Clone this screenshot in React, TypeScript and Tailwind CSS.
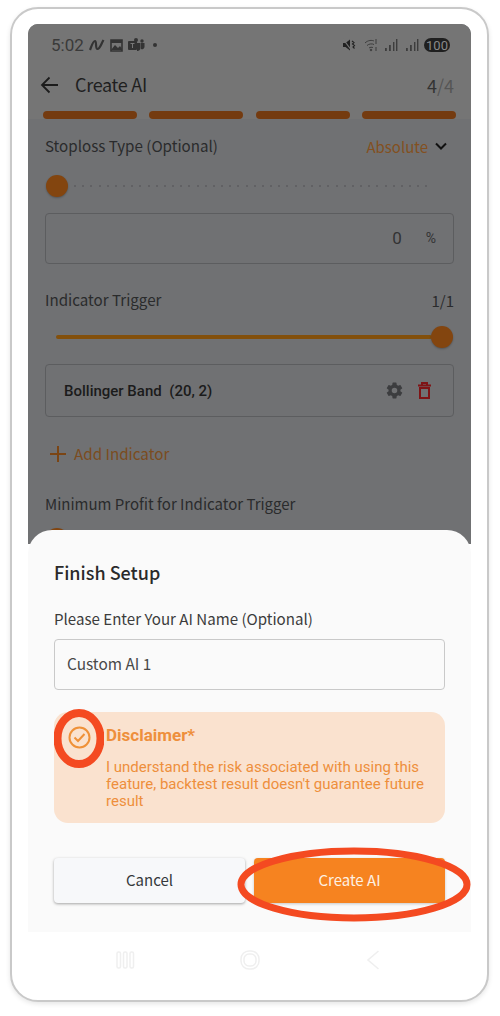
import React from "react";

const cjk = "font-['Noto_Sans_CJK_SC','Noto_Sans',sans-serif]";
const rob = "font-['Roboto',sans-serif]";

function Bar() {
  return <div className="h-2 w-[94px] rounded-full bg-[#743b10]" />;
}

function Thumb() {
  return <div className="h-[22px] w-[22px] shrink-0 rounded-full bg-[#83450f] shadow-[0_1px_2px_rgba(0,0,0,0.25)]" />;
}

const dots = Array.from({ length: 44 }, (_, i) => i);

function StatusBar() {
  return (
    <div className={`flex h-[42px] items-center justify-between pl-[23px] pr-[21px] text-[#3a3a3a] ${rob}`}>
      <div className="flex items-center gap-[5px]">
        <span className="text-[17px] leading-none">5:02</span>
        <svg width="16" height="12" viewBox="0 0 16 12" fill="none" stroke="#333" strokeWidth="2.2">
          <path d="M1 11 C3 6 4 2 6 2 C8 2 6 10 8.500 10 C11 10 12 5 14.500 1" />
        </svg>
        <svg width="13" height="13" viewBox="0 0 13 13">
          <path d="M1 1h11v11H1z" fill="none" stroke="#333" strokeWidth="1.600" />
          <path d="M1 11l4-5 3 3 2-2 2 3v1H1z" fill="#333" />
          <rect x="1" y="1" width="11" height="3" fill="#333" />
        </svg>
        <svg width="17" height="14" viewBox="0 0 17 14" fill="#333">
          <rect x="0" y="3" width="9" height="9" rx="1" />
          <circle cx="8" cy="2" r="2" />
          <circle cx="14" cy="3" r="1.700" />
          <path d="M9 5h3.500v5a3 3 0 0 1-3.500 3zM13 5h3.500v4a2.500 2.500 0 0 1-3.500 2z" />
          <path d="M2.500 5h4v1H5v4H4V6H2.500z" fill="#777" />
        </svg>
        <div className="ml-[3px] h-1 w-1 rounded-full bg-[#333]" />
      </div>
      <div className="flex items-center gap-[4px]">
        <svg width="14" height="14" viewBox="0 0 14 14" fill="#222">
          <path d="M1 5h2.500L8 1.500v11L3.500 9H1z" />
          <path d="M1 1l9 12" stroke="#777" strokeWidth="1.200" />
          <path d="M10 3l2 1.500-1.500 1.500 2 1.500-1.500 1.500 1.500 1.500" stroke="#222" fill="none" strokeWidth="1.100" />
        </svg>
        <svg className="ml-[4px]" width="16" height="14" viewBox="0 0 16 14" fill="none" stroke="#3d3d3d" strokeWidth="1">
          <path d="M1 5c3-3 7-3 9-2M3 7.500c2-1.800 5-2 7-1M5 10c1-.8 3-1 4-.4" />
          <circle cx="7" cy="12" r="0.800" fill="#3d3d3d" />
          <path d="M12 1v5M12 9v4" />
        </svg>
        <svg width="14" height="14" viewBox="0 0 14 14" fill="#3d3d3d">
          <rect x="1" y="10" width="1.800" height="3" />
          <rect x="5" y="7" width="1.800" height="6" />
          <rect x="9" y="4" width="1.400" height="9" />
          <rect x="12" y="1" width="1.400" height="12" />
        </svg>
        <svg className="ml-[3px]" width="14" height="14" viewBox="0 0 14 14" fill="#3d3d3d">
          <rect x="1" y="10" width="1.800" height="3" />
          <rect x="5" y="7" width="1.800" height="6" />
          <rect x="9" y="4" width="1.400" height="9" />
          <rect x="12" y="1" width="1.400" height="12" />
        </svg>
        <div className="ml-[1px] flex h-[14px] w-[26px] items-center justify-center rounded-full bg-[#1f1f1f] text-[13px] leading-none text-[#8a8a8a]">
          100
        </div>
      </div>
    </div>
  );
}

function Background() {
  return (
    <div className={`h-[520px] overflow-hidden bg-[#707173] text-[#2a2b2c] ${cjk}`}>
      <div className="bg-[#757575]">
        <StatusBar />
        <div className="flex h-[38px] items-center justify-between pl-[12px] pr-[17px]">
          <div className="flex items-center gap-[16px]">
            <svg width="19" height="18" viewBox="0 0 19 18" fill="none" stroke="#1c1c1c" strokeWidth="1.800">
              <path d="M18 9H2M9.500 1.500L2 9l7.500 7.500" />
            </svg>
            <span className="mb-[2px] text-[18px] leading-none tracking-[-0.3px] text-[#1f1f1f]">Create AI</span>
          </div>
          <span className="mb-[1px] text-[18px] leading-none">
            <span className="text-[#333]">4</span>
            <span className="text-[#555]">/4</span>
          </span>
        </div>
        <div className="flex justify-between px-[15px] pt-[7px]">
          <Bar />
          <Bar />
          <Bar />
          <Bar />
        </div>
      </div>
      <div className="flex flex-col px-[17px]">
        <div className="mt-[16px] flex h-[22px] items-center justify-between pr-[7px]">
          <span className="text-[15.15px] leading-none">Stoploss Type (Optional)</span>
          <div className="flex items-center gap-[7px]">
            <span className="text-[15px] leading-none text-[#83501f]">Absolute</span>
            <svg width="12" height="8" viewBox="0 0 12 8" fill="none" stroke="#111" strokeWidth="2">
              <path d="M1 1.500l5 5 5-5" />
            </svg>
          </div>
        </div>
        <div className="mt-[18px] flex h-[22px] items-center pl-[1px]">
          <Thumb />
          <div className="ml-[6px] flex w-[354px] justify-between">
            {dots.map((d) => (
              <div key={d} className="h-[2px] w-[2px] rounded-full bg-[#5c5d5f]" />
            ))}
          </div>
        </div>
        <div className="mt-[16px] flex h-[51px] items-center justify-end rounded border border-[#5c5d5f] pr-[17px]">
          <span className={`text-[17px] ${rob} text-[#333]`}>0</span>
          <span className={`ml-[24px] text-[14px] ${rob} text-[#333]`}>%</span>
        </div>
        <div className="mt-[25px] flex h-[22px] items-center justify-between">
          <span className="text-[15.15px] leading-none">Indicator Trigger</span>
          <span className="text-[15px] leading-none">1/1</span>
        </div>
        <div className="mt-[15px] flex h-[22px] items-center pl-[11px] pr-[1px]">
          <div className="h-1 flex-1 rounded-full bg-[#83500c]" />
          <div className="-ml-[1px]">
            <Thumb />
          </div>
        </div>
        <div className="mt-[16px] flex h-[53px] items-center justify-between rounded border border-[#5c5d5f] pl-[18px] pr-[22px]">
          <span className={`mt-[1px] whitespace-pre text-[15px] font-medium ${rob} text-[#1b1b1b]`}>Bollinger Band  (20, 2)</span>
          <div className="flex items-center gap-[14px]">
            <svg width="19" height="19" viewBox="0 0 24 24" fill="#3c3d3f">
              <path d="M19.430 12.980c.04-.32.07-.640.07-.980s-.03-.660-.07-.980l2.110-1.650a.5.5 0 0 0 .12-.640l-2-3.460a.5.5 0 0 0-.610-.220l-2.490 1a7.300 7.300 0 0 0-1.690-.980l-.38-2.650A.49.490 0 0 0 14 2h-4a.49.490 0 0 0-.490.420l-.38 2.650c-.610.250-1.170.590-1.690.980l-2.490-1a.5.5 0 0 0-.610.220l-2 3.460a.49.490 0 0 0 .12.640l2.110 1.650c-.04.320-.07.650-.07.980s.03.660.07.980l-2.110 1.650a.5.5 0 0 0-.12.640l2 3.460c.12.220.39.300.610.220l2.490-1c.52.400 1.080.730 1.690.980l.38 2.650c.03.240.24.420.49.420h4c.25 0 .46-.18.490-.42l.38-2.650c.610-.25 1.170-.59 1.690-.98l2.490 1c.23.090.49 0 .61-.22l2-3.460a.5.5 0 0 0-.12-.64zM12 15.500a3.500 3.500 0 1 1 0-7 3.500 3.500 0 0 1 0 7z" />
            </svg>
            <svg width="13" height="17" viewBox="0 0 13 17" fill="none" stroke="#7f1416" strokeWidth="2">
              <path d="M0 3.500h13M4 3V1h5v2" />
              <path d="M2 6h9v10H2z" />
            </svg>
          </div>
        </div>
        <div className="mt-[26px] flex h-[22px] items-center gap-[8px] pl-[5px]">
          <svg width="16" height="16" viewBox="0 0 16 16" stroke="#7b4514" strokeWidth="2">
            <path d="M8 0v16M0 8h16" />
          </svg>
          <span className="text-[15.2px] leading-none text-[#7b4c20]">Add Indicator</span>
        </div>
        <div className="mt-[27px] flex h-[22px] items-center">
          <span className="text-[15px] leading-none">Minimum Profit for Indicator Trigger</span>
        </div>
        <div className="mt-[14px] pl-[1px]">
          <Thumb />
        </div>
      </div>
    </div>
  );
}

function Sheet() {
  return (
    <div className={`relative -mt-[14px] h-[402px] rounded-t-[24px] bg-[#fafafa] px-[26px] pt-[30px] text-[#303030] ${cjk}`}>
      <div className="flex h-[24px] items-center text-[18px] font-medium leading-none text-[#2a2a2a]">Finish Setup</div>
      <div className="mt-[24px] flex h-[22px] items-center text-[15.1px] leading-none text-[#3c3c3c]">
        Please Enter Your AI Name (Optional)
      </div>
      <div className="mt-[9px] flex h-[51px] items-center rounded border border-[#c9c9c9] pb-[2px] pl-[12px] text-[15.400px] text-[#484848]">
        Custom AI 1
      </div>
      <div className={`relative mt-[22px] h-[111px] rounded-[14px] bg-[#fae2cf] pl-[52px] pr-[16px] pt-[12px] ${rob} text-[#ee8f3c]`}>
        <div className="flex h-[22px] items-center text-[17px] font-bold leading-none">Disclaimer*</div>
        <p className="mt-[13px] text-[15px] leading-[17px]">
          I understand the risk associated with using this feature, backtest result doesn't guarantee future result
        </p>
        <svg className="absolute left-[14px] top-[14px]" width="23" height="23" viewBox="0 0 23 23" fill="none" stroke="#ef9138" strokeWidth="2">
          <circle cx="11.500" cy="11.500" r="10" />
          <path d="M6.500 11.500l3.500 3.500 6.500-7" />
        </svg>
        <svg className="absolute -top-[3px] left-0" width="50" height="59" viewBox="0 0 50 59" fill="none">
          <ellipse cx="25" cy="29.500" rx="21.500" ry="25.500" stroke="#f44a21" strokeWidth="8" />
        </svg>
      </div>
      <div className="mt-[35px] flex gap-[9px]">
        <div className="flex h-[45px] flex-1 items-center justify-center rounded bg-[#f7f8fa] text-[15px] text-[#35383c] shadow-[0_1px_3px_rgba(0,0,0,0.35)]">
          Cancel
        </div>
        <div className="flex h-[45px] flex-1 items-center justify-center rounded bg-[#f68320] text-[15px] text-[#fdf0e2] shadow-[0_1px_3px_rgba(0,0,0,0.2)]">
          Create AI
        </div>
      </div>
      <svg className="absolute left-[209px] top-[317px]" width="234" height="75" viewBox="0 0 234 75" fill="none">
        <ellipse cx="117" cy="37.500" rx="113" ry="33.500" stroke="#f44a21" strokeWidth="7" />
      </svg>
    </div>
  );
}

function NavBar() {
  return (
    <div className="flex h-[56px] items-center justify-center">
      <div className="flex w-[280px] items-center justify-between pl-[6px] pr-[10px]">
        <svg width="19" height="18" viewBox="0 0 19 18" fill="none" stroke="#efefef" strokeWidth="1.500">
          <rect x="1" y="1" width="3.500" height="16" rx="1.500" />
          <rect x="7.500" y="1" width="3.500" height="16" rx="1.500" />
          <rect x="14" y="1" width="3.500" height="16" rx="1.500" />
        </svg>
        <svg width="20" height="20" viewBox="0 0 20 20" fill="none" stroke="#efefef" strokeWidth="1.500">
          <rect x="1" y="1" width="18" height="18" rx="8" />
          <rect x="4" y="4" width="12" height="12" rx="5" />
        </svg>
        <svg width="14" height="20" viewBox="0 0 14 20" fill="none" stroke="#efefef" strokeWidth="1.600">
          <path d="M12.500 1L2 10l10.500 9" />
        </svg>
      </div>
    </div>
  );
}

export default function App() {
  return (
    <div className="h-[1016px] w-[500px] bg-white pl-[10px] pt-[7px]">
      <div className="h-[995px] w-[479px] rounded-[28px] border-2 border-[#c9c9c9] bg-white px-[16px] pt-[15px] shadow-[0_2px_5px_rgba(0,0,0,0.1)]">
        <div className="w-[443px]">
          <div className="overflow-hidden rounded-t-[10px]">
            <Background />
          </div>
          <Sheet />
          <NavBar />
        </div>
      </div>
    </div>
  );
}
